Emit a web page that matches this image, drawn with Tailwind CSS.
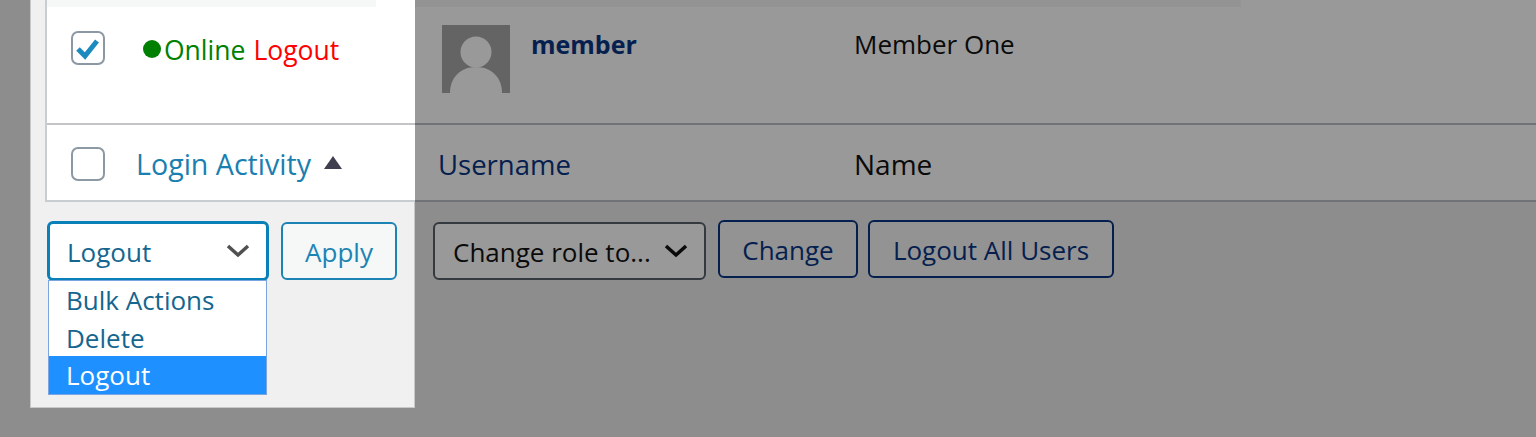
<!DOCTYPE html>
<html lang="en">
<head>
  <meta charset="UTF-8">
  <title>Users</title>
  <script src="https://cdn.jsdelivr.net/npm/@tailwindcss/browser@4"></script>
</head>
<body class="bg-[#8d8d8d] font-['Open_Sans',sans-serif] text-[26px] overflow-hidden">
  <div class="flex h-[437px] items-start">
    <!-- left gutter -->
    <div class="w-[30px] shrink-0"></div>

    <!-- highlighted column -->
    <div class="w-[385px] h-[408px] shrink-0 bg-[#f0f0f1] border-l border-r border-b border-[#c8c8c8] pl-[14px]">
      <div class="w-[370px] bg-white border-l-2 border-b-2 border-[#c8cdd2]">
        <div class="h-[7px] w-[329px] bg-[#f6f7f7]"></div>
        <div class="h-[118px] border-b-2 border-[#c3c4c7] flex items-start pl-[24px] pt-[24px]">
          <span class="w-[34px] h-[34px] rounded-[7px] border-2 border-[#8c98a3] flex items-center justify-center">
            <svg width="26" height="24" viewBox="0 0 26 24"><path d="M3 13l7 7L22 5" fill="none" stroke="#1d8abf" stroke-width="5"/></svg>
          </span>
          <span class="ml-[38px] mt-[3px] flex items-center leading-[32px] text-[26.5px]">
            <span class="w-[18px] h-[18px] rounded-full bg-[#008000] mr-[3px] -mt-[3px]"></span>
            <span class="text-[#008000]">Online</span>
            <span class="text-[#ff0000] ml-[8px]">Logout</span>
          </span>
        </div>
        <div class="h-[75px] flex items-center pl-[24px]">
          <span class="w-[34px] h-[34px] mt-[2px] rounded-[7px] border-2 border-[#8c98a3]"></span>
          <span class="ml-[31px] mt-[4px] text-[28.6px] text-[#1a7fb0]">Login Activity</span>
          <svg class="ml-[13px] -mt-[1px]" width="18" height="13" viewBox="0 0 18 13"><path d="M9 0l9 13H0z" fill="#3f3f4f"/></svg>
        </div>
      </div>

      <div class="flex items-start mt-[19px] pl-[2px]">
        <div class="relative w-[222px]">
          <div class="h-[60px] bg-white border-[3px] border-[#0a80b8] rounded-[6px] flex items-center justify-between pl-[17px] pr-[16px] text-[#14668f]">
            <span class="mt-[2px]">Logout</span>
            <svg width="24" height="14" viewBox="0 0 24 14"><path d="M2 2l10 9 10-9" fill="none" stroke="#505050" stroke-width="3.5"/></svg>
          </div>
          <!-- open select menu -->
          <div class="absolute left-[1px] top-[59px] w-[219px] bg-white border border-[#7aa5e0] text-[#14668f] leading-[38px]">
            <div class="pl-[17px] h-[38px]">Bulk Actions</div>
            <div class="pl-[17px] h-[37px]">Delete</div>
            <div class="pl-[17px] h-[38px] bg-[#1e90ff] text-white">Logout</div>
          </div>
        </div>
        <button class="ml-[12px] mt-[1px] w-[116px] h-[58px] pt-[2px] bg-[#f6f7f7] border-2 border-[#1b84b5] rounded-[6px] text-[#1b84b5]">Apply</button>
      </div>
    </div>

    <!-- dimmed columns -->
    <div class="flex-1 min-w-0">
      <div class="bg-[#999999] border-b-2 border-[#6f7276]">
        <div class="h-[7px] w-[826px] bg-[#939393]"></div>
        <div class="h-[118px] border-b-2 border-[#6f7276] flex items-start pt-[18px] pl-[27px]">
          <svg class="shrink-0" width="68" height="68" viewBox="0 0 68 68">
            <rect width="68" height="68" fill="#646464"/>
            <circle cx="34" cy="27" r="15.5" fill="#999999"/>
            <path d="M8 68c0-15 10-26 26-26s26 11 26 26z" fill="#999999"/>
          </svg>
          <span class="w-[344px] pl-[21px] mt-[1px] text-[25px] font-bold text-[#05204f]">member</span>
          <span class="text-[#0a0a0a]">Member One</span>
        </div>
        <div class="h-[75px] flex items-center">
          <span class="w-[439px] pl-[23px] mt-[4px] text-[27.5px] text-[#05204f]">Username</span>
          <span class="mt-[3px] text-[28px] text-[#0a0a0a]">Name</span>
        </div>
      </div>
      <div class="flex items-start mt-[18px] pl-[18px]">
        <div class="w-[273px] h-[58px] mt-[2px] bg-[#999999] border-2 border-[#353a40] rounded-[6px] flex items-center justify-between pl-[18px] pr-[16px] text-[#0a0a0a]">
          <span class="mt-[2px] whitespace-nowrap">Change role to...</span>
          <svg width="24" height="14" viewBox="0 0 24 14"><path d="M2 2l10 9 10-9" fill="none" stroke="#0a0a0a" stroke-width="3.5"/></svg>
        </div>
        <button class="ml-[12px] w-[140px] h-[58px] pt-[2px] bg-[#939393] border-2 border-[#05204f] rounded-[6px] text-[#05204f]">Change</button>
        <button class="ml-[10px] w-[246px] h-[58px] pt-[2px] bg-[#939393] border-2 border-[#05204f] rounded-[6px] text-[#05204f]">Logout All Users</button>
      </div>
    </div>
  </div>
</body>
</html>
